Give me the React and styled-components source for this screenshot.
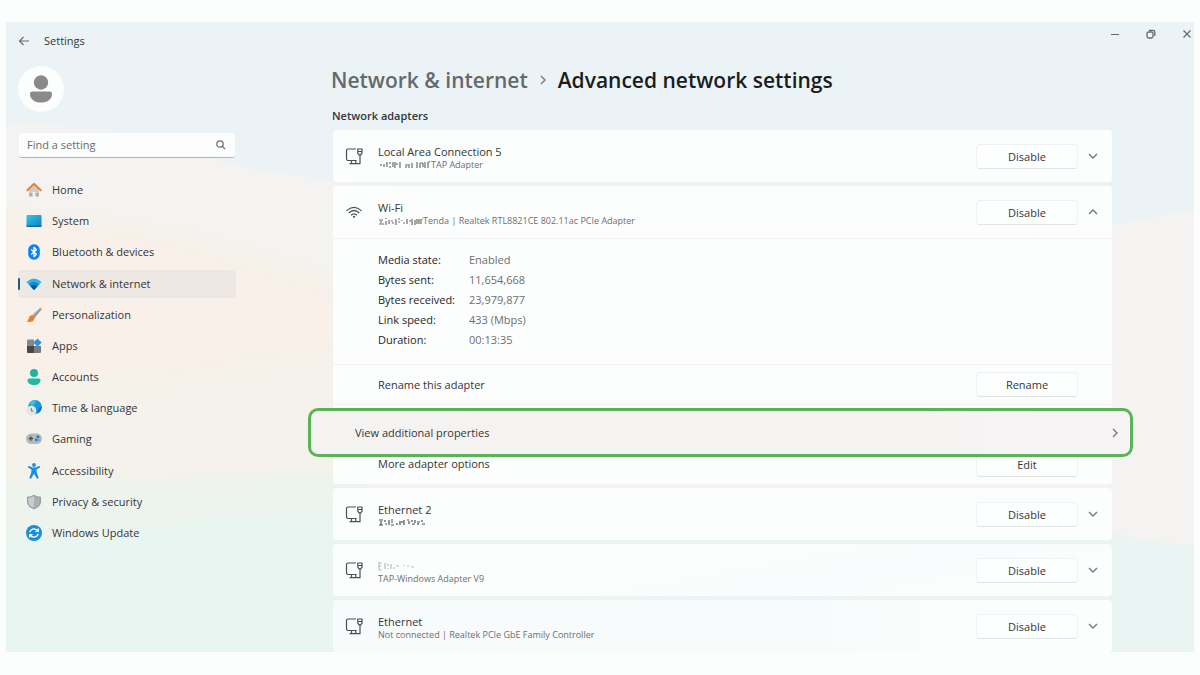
import React from "react";
import styled, { createGlobalStyle } from "styled-components";

const GlobalStyle = createGlobalStyle`
  *, *::before, *::after { box-sizing: border-box; }
  body {
    margin: 0;
    background: #fcfdfd;
    color: #343638;
    font: 11px/16px "Open Sans", "Noto Sans", sans-serif;
  }
  button, input { font: inherit; color: inherit; }
  h1, h2, h3, p, ul, dl, dd { margin: 0; padding: 0; font: inherit; }
  svg { display: block; flex: none; }
`;

const Page = styled.div`
  padding: 22px 6px;
`;

const Window = styled.div`
  position: relative;
  isolation: isolate;
  overflow: hidden;
  background: #f4f3f1;
`;

const WallpaperSvg = styled.svg`
  position: absolute;
  inset: 0;
  z-index: -1;
  width: 100%;
  height: 100%;
`;

const TitleBar = styled.header`
  display: flex;
  justify-content: space-between;
  height: 38px;
`;

const TitleGroup = styled.div`
  display: flex;
  align-items: center;
  gap: 14px;
  padding-left: 12px;
`;

const WindowControls = styled.div`
  display: flex;
  gap: 24px;
  padding: 6px 1px 0 0;
`;

const IconButton = styled.button`
  display: grid;
  place-items: center;
  width: 12px;
  height: 12px;
  padding: 0;
  border: 0;
  background: none;
`;

const Body = styled.div`
  display: flex;
  align-items: flex-start;
`;

const Sidebar = styled.aside`
  flex: 0 0 242px;
  padding: 6px 12px 0;
`;

const Avatar = styled.div`
  display: grid;
  place-items: center;
  width: 46px;
  height: 46px;
  border-radius: 50%;
  background: #fcfdfd;
`;

const SearchBox = styled.label`
  display: flex;
  align-items: center;
  height: 25px;
  margin: 21px 1px 18px 1px;
  padding: 0 8px;
  border-radius: 3px;
  border-bottom: 1px solid #a9b6ba;
  background: #fcfdfd;
`;

const SearchInput = styled.input`
  flex: 1;
  min-width: 0;
  padding: 0;
  border: 0;
  outline: 0;
  background: none;
  &::placeholder { color: #6a6c6d; opacity: 1; }
`;

const NavList = styled.ul`
  display: flex;
  flex-direction: column;
  justify-content: space-between;
  height: 371px;
  list-style: none;
`;

const NavLink = styled.a`
  position: relative;
  display: flex;
  align-items: center;
  gap: 10px;
  height: 28px;
  padding-left: 8px;
  border-radius: 4px;
  color: inherit;
  text-decoration: none;
  background: ${(p) => (p.$active ? "#eee8e5" : "none")};
  &::before {
    content: "";
    position: absolute;
    left: 0;
    width: 2px;
    height: 12px;
    border-radius: 1px;
    background: ${(p) => (p.$active ? "#1b5f7d" : "none")};
  }
`;

const Main = styled.main`
  flex: 1;
  min-width: 0;
  padding: 5px 82px 0 85px;
`;

const Breadcrumb = styled.div`
  display: flex;
  align-items: center;
  gap: 9px;
  margin-left: -2px;
  font-size: 21px;
  line-height: 30px;
  font-weight: 600;
  white-space: nowrap;
`;

const ParentCrumb = styled.a`
  color: #65696b;
  text-decoration: none;
`;

const PageTitle = styled.h1`
  color: #1b1c1d;
`;

const SectionLabel = styled.h2`
  margin: 13px 0 6px -1px;
  font-weight: 600;
`;

const CardList = styled.div`
  display: grid;
  gap: 4px;
`;

const Card = styled.section`
  border-radius: 4px;
  background: ${(p) => p.$tint || "#fcfdfd"};
`;

const CardHeader = styled.div`
  display: flex;
  align-items: center;
  height: 52px;
  padding: 0 13px 0 12px;
`;

const CardText = styled.div`
  flex: 1;
  min-width: 0;
  padding: 3px 0 0 15px;
`;

const CardTitle = styled.h3`
  display: flex;
  align-items: center;
  height: 14px;
`;

const CardSubtitle = styled.p`
  display: flex;
  align-items: center;
  height: 12px;
  color: #6d6f70;
  font-size: 9px;
  white-space: nowrap;
`;

const ActionButton = styled.button`
  width: 102px;
  height: 25px;
  padding: 1px 0 0;
  border: 1px solid #f1f1f1;
  border-bottom-color: #e2e3e3;
  border-radius: 4px;
  background: #fdfefe;
`;

const ExpandButton = styled(IconButton)`
  margin-left: 9px;
`;

const Details = styled.dl`
  display: grid;
  grid-template-columns: 91px 1fr;
  grid-auto-rows: 20px;
  align-items: center;
  height: 126px;
  padding: 11px 45px 14px;
  border-top: 1px solid #f3f2f1;
`;

const Term = styled.dt`
  color: #242628;
`;

const Value = styled.dd`
  color: #6d6f70;
`;

const OptionRow = styled.div`
  display: flex;
  align-items: center;
  justify-content: space-between;
  position: relative;
  height: 40px;
  padding: 0 34px 0 45px;
  border-top: ${(p) => (p.$divided ? "1px solid #f3f2f1" : "0")};
`;

const Callout = styled.a`
  position: absolute;
  inset: 3px -21px -13px -25px;
  z-index: 1;
  display: flex;
  align-items: center;
  justify-content: space-between;
  padding: 0 9px 0 44px;
  border: 3px solid #5cb258;
  border-radius: 10px;
  background: linear-gradient(90deg, #f4f3f2 75%, #f7f4f5 90%);
  color: inherit;
  text-decoration: none;
`;

function Wallpaper() {
  return (
    <WallpaperSvg viewBox="0 0 1188 630" preserveAspectRatio="none" aria-hidden="true">
      <defs>
        <filter id="soft" x="-10%" y="-10%" width="120%" height="120%">
          <feGaussianBlur stdDeviation="6" />
        </filter>
        <filter id="edge" x="-5%" y="-5%" width="110%" height="110%">
          <feGaussianBlur stdDeviation="1" />
        </filter>
      </defs>
      <rect width="1188" height="630" fill="#f4f3f1" />
      <path d="M-20 -20H1210V188C1160 190 1130 200 1104 203L340 160C290 154 260 150 228 143C190 130 150 118 110 110C70 103 30 103 -20 101Z" fill="#ebf3f6" filter="url(#edge)" />
      <g filter="url(#soft)">
        <path d="M-40 186C50 184 100 194 160 204C230 216 290 244 360 256V700H-40Z" fill="#f4f2ea" />
        <path d="M-40 196C60 194 90 204 150 216C220 230 280 258 350 276V332C290 334 220 340 160 358L-40 362Z" fill="#f8f0e9" />
        <path d="M-40 466C60 454 200 460 360 450V700H-40Z" fill="#edf3ed" />
        <path d="M-40 524C60 512 180 496 360 488V700H-40Z" fill="#e8f5f1" />
      </g>
      <path d="M330 480C600 490 900 500 1104 510C1130 518 1160 522 1210 524V660H330Z" fill="#eaf4f2" filter="url(#edge)" />
    </WallpaperSvg>
  );
}

function Chevron({ dir = "down" }) {
  const turn = { down: 0, up: 180, right: -90 }[dir];
  return (
    <svg width="12" height="12" viewBox="0 0 12 12" aria-hidden="true">
      <path d="M2 4L6 8L10 4" transform={`rotate(${turn} 6 6)`} fill="none" stroke="#77797a" strokeWidth="1.4" />
    </svg>
  );
}

function EthernetIcon() {
  return (
    <svg width="18" height="18" viewBox="0 0 18 18" fill="none" stroke="#4c4f52" strokeWidth="1.2" aria-hidden="true">
      <path d="M11 2H3Q1.500 2 1.500 3.500V11.500Q1.500 13.500 3 13.500H11.500" />
      <path d="M6.500 13.500V16.500M10.800 13.500V16.500M4.500 16.700H15V8" />
      <path d="M12.800 2H17V6.200L15.700 7.900H14L12.800 6.200ZM12.800 4.500H17" />
    </svg>
  );
}

function WifiIcon() {
  return (
    <svg width="18" height="18" viewBox="0 0 18 18" fill="none" stroke="#4c4f52" strokeWidth="1.2" aria-hidden="true">
      <path d="M1.400 7.900Q9 1 16.600 7.900M3.700 10Q9 5 14.300 10M6 12.200Q9 9.400 12 12.200" />
      <circle cx="9" cy="13.800" r="1.100" fill="#4c4f52" stroke="none" />
    </svg>
  );
}

/* Worn-away strokes left where a name has been rubbed out. */
function Scrub({ width, marks, color = "#6d6f70" }) {
  return (
    <svg width={width} height="10" viewBox={`0 0 ${width} 10`} aria-hidden="true">
      <path d={marks} fill="none" stroke={color} strokeWidth="1.2" />
    </svg>
  );
}

const SCRUBS = {
  lan: "M3 4V6M6 4V7M9 2V7M12 2V4M12 6V8M15 2V7M17 2V8M19 3V5M22 2V8M27 5H30M28 6V8M31 4V8M34 3V8M39 2V8M42 3V8M42 3H45M45 3V7M47 2V8M50 2V8M50 2H52",
  wifi: "M1 4H5M3 5V7M1 8H6M8 2V3M8 5V9M11 4V8M13 5H15M14 7H16M18 3V9M20 3H22M20 6H22M24 4V5M25 7H27M29 3V8M31 5H33M34 3V9M37 4V9M39 3V8M41 3V8M43 3V8M44 3H46",
  eth: "M1 2H5M3 3V7M1 7H5M7 2V4M7 6H9M11 2V7M13 2H15M13 4H15M13 7H16M19 5V7M22 3V7M24 3V5M26 2V7M29 2H31M31 3V6M34 2V4M34 6H37M37 2V5M39 4H42M40 5V7M44 2V4M44 6H47",
  name: "M1 1V9M1 2H4M1 5H3M1 9H4M7 2V8M10 3V5M10 7V8M13 3V8M16 6V8M18 5H21M26 4V5M29 5H31M33 6H36",
};

const NAV_ART = {
  Home: (
    <>
      <path d="M3 7L8 2.500L13 7V14.500H9.500V10H6.500V14.500H3Z" fill="#cfcdcc" />
      <path d="M3 11H6.500V14.500H3ZM9.500 11H13V14.500H9.500Z" fill="#b2b2b3" />
      <path d="M1.300 8.200L8 1.800L14.700 8.200" fill="none" stroke="#e9832f" strokeWidth="2" strokeLinecap="round" strokeLinejoin="round" />
    </>
  ),
  System: (
    <>
      <rect x=".5" y="2" width="15" height="12" rx="1" fill="url(#screen)" />
      <path d="M.5 12.500H15.500V13Q15.500 14 14.500 14H1.500Q.5 14 .5 13Z" fill="#106d9f" />
    </>
  ),
  "Bluetooth & devices": (
    <>
      <rect x="2.200" y=".3" width="11.600" height="15.400" rx="5.600" fill="#0a83f4" />
      <path d="M5.200 5.500L10.500 10.300L8 12.700V3.300L10.500 5.700L5.200 10.500" fill="none" stroke="#fff" strokeWidth="1.200" strokeLinejoin="round" />
    </>
  ),
  "Network & internet": (
    <>
      <path d="M8 14L.4 6Q8-1 15.600 6Z" fill="#2db3ea" />
      <path d="M8 14L2.600 8.300Q8 3.300 13.400 8.300Z" fill="#1688d0" />
      <path d="M8 14L4.700 10.500Q8 7.500 11.300 10.500Z" fill="#0a5396" />
    </>
  ),
  Personalization: (
    <>
      <path d="M14.300.7Q16 .8 15.400 2.400L8.500 11L5.800 8.500Z" fill="#8d9399" />
      <path d="M14.300.7L5.800 8.500L7 9.600L15 1Z" fill="#b5babd" />
      <path d="M5.500 8.300Q8.700 9 8.500 11.500C8 15 3.500 15.600.4 14.500Q2.500 13.500 2.800 11.300Q3.200 8.600 5.500 8.300Z" fill="#ec7c25" />
    </>
  ),
  Apps: (
    <>
      <path d="M2 1.500H8V8H1V2.500Q1 1.500 2 1.500Z" fill="#85898d" />
      <path d="M1 8H8V15H2Q1 15 1 14Z" fill="#44484c" />
      <path d="M8 8H15V14Q15 15 14 15H8Z" fill="#777b7f" />
      <path d="M11.500.4L15.700 4.600L11.500 8.800L7.300 4.600Z" fill="#2394e8" />
    </>
  ),
  Accounts: (
    <>
      <circle cx="8" cy="4" r="4" fill="#19b89f" />
      <path d="M3 9.500H13Q14.500 9.500 14.500 11C14.500 14.500 11.500 16 8 16S1.500 14.500 1.500 11Q1.500 9.500 3 9.500Z" fill="#1fb9a0" />
    </>
  ),
  "Time & language": (
    <>
      <circle cx="9" cy="7" r="6.900" fill="#1b98da" />
      <path d="M3.500 3.500Q6 .2 10 .4Q11 2 8.500 3.500Q8.500 5.500 6 5.500Q4 5 3.500 3.500Z" fill="#3fc0dc" />
      <path d="M15.800 6Q15.500 11.500 11.500 13.300Q10.500 9 15.800 6Z" fill="#1277c4" />
      <circle cx="5.300" cy="10.700" r="5" fill="#e6e6e8" />
      <path d="M5.300 8V11H7.500" fill="none" stroke="#72777b" />
    </>
  ),
  Gaming: (
    <>
      <rect x="0" y="2.500" width="16" height="10.500" rx="5.200" fill="#b3b9be" />
      <path d="M4.800 5.300V9.700M2.600 7.500H7" stroke="#4b5054" strokeWidth="1.300" />
      <circle cx="12" cy="5.800" r="1.400" fill="#1d6fb8" />
      <circle cx="10.300" cy="8.900" r="1.400" fill="#2183cf" />
      <circle cx="13" cy="9" r="1" fill="#5ba2d8" />
    </>
  ),
  Accessibility: (
    <>
      <circle cx="8" cy="2" r="1.900" fill="#1b8ee0" />
      <path d="M2.800 3.100L6.500 4.600H9.500L13.200 3.100Q14.600 3.200 14 4.500L10.600 6.400V9.200L12.600 14.600Q12.300 16 10.900 15.500L8 10.800L5.100 15.500Q3.700 16 3.400 14.600L5.400 9.200V6.400L2 4.500Q1.400 3.200 2.800 3.100Z" fill="#1b8ee0" />
    </>
  ),
  "Privacy & security": (
    <>
      <path d="M8 .7Q11 2.600 15 2.800V7.500C15 11.500 12 13.800 8 15.200C4 13.800 1 11.500 1 7.500V2.800Q5 2.600 8 .7Z" fill="#989ea3" />
      <path d="M8 2Q5 3.600 2.200 3.900V7.500C2.200 10.700 4.500 12.700 8 14Z" fill="#c8cccf" />
      <path d="M8 2Q11 3.600 13.800 3.900V7.500C13.800 10.700 11.500 12.700 8 14Z" fill="#abb0b4" />
    </>
  ),
  "Windows Update": (
    <>
      <circle cx="8" cy="8" r="8" fill="#1b8ddb" />
      <path d="M3.700 7.300Q5 3.900 8.200 3.900Q10.500 4 12 6M12.300 3.500V6.300H9.500M12.300 8.700Q11 12.100 7.800 12.100Q5.500 12 4 10M3.700 12.500V9.700H6.500" fill="none" stroke="#fff" strokeWidth="1.300" />
    </>
  ),
};

function NavIcon({ name }) {
  return (
    <svg width="16" height="16" viewBox="0 0 16 16" aria-hidden="true">
      <defs>
        <linearGradient id="screen" x1="0" y1="0" x2="1" y2="1">
          <stop offset="0" stopColor="#2ccbe6" />
          <stop offset="1" stopColor="#1479c4" />
        </linearGradient>
      </defs>
      {NAV_ART[name]}
    </svg>
  );
}

const STATS = [
  ["Media state:", "Enabled"],
  ["Bytes sent:", "11,654,668"],
  ["Bytes received:", "23,979,877"],
  ["Link speed:", "433 (Mbps)"],
  ["Duration:", "00:13:35"],
];

function Adapter({ icon, title, subtitle, open, tint, children }) {
  return (
    <Card $tint={tint}>
      <CardHeader>
        {icon || <EthernetIcon />}
        <CardText>
          <CardTitle>{title}</CardTitle>
          <CardSubtitle>{subtitle}</CardSubtitle>
        </CardText>
        <ActionButton type="button">Disable</ActionButton>
        <ExpandButton type="button" aria-label="Details" aria-expanded={!!open}>
          <Chevron dir={open ? "up" : "down"} />
        </ExpandButton>
      </CardHeader>
      {children}
    </Card>
  );
}

export default function App() {
  return (
    <Page>
      <GlobalStyle />
      <Window>
        <Wallpaper />
        <TitleBar>
          <TitleGroup>
            <IconButton type="button" aria-label="Back">
              <svg width="12" height="12" viewBox="0 0 12 12" fill="none" stroke="#66696b" strokeWidth="1.100">
                <path d="M11 6H1.500M5.500 2L1.500 6L5.500 10" />
              </svg>
            </IconButton>
            <span>Settings</span>
          </TitleGroup>
          <WindowControls>
            <IconButton type="button" aria-label="Minimize">
              <svg width="12" height="12" viewBox="0 0 12 12" stroke="#66696b">
                <path d="M2 6.500H10" />
              </svg>
            </IconButton>
            <IconButton type="button" aria-label="Restore">
              <svg width="12" height="12" viewBox="0 0 12 12" fill="none" stroke="#66696b" strokeWidth="1.300">
                <rect x="2" y="4" width="6" height="6" rx="1.500" />
                <path d="M4 2.300H8Q9.800 2.300 9.800 4V8" />
              </svg>
            </IconButton>
            <IconButton type="button" aria-label="Close">
              <svg width="12" height="12" viewBox="0 0 12 12" stroke="#66696b" strokeWidth="1.200">
                <path d="M2.500 2.500L9.500 9.500M9.500 2.500L2.500 9.500" />
              </svg>
            </IconButton>
          </WindowControls>
        </TitleBar>
        <Body>
          <Sidebar>
            <Avatar>
              <svg width="24" height="28" viewBox="0 0 24 28" fill="#8a8a8b" aria-hidden="true">
                <circle cx="12" cy="7.500" r="7.200" />
                <path d="M3 16.500H21Q23 16.500 23 19C23 25 17.500 27.500 12 27.500S1 25 1 19Q1 16.500 3 16.500Z" />
              </svg>
            </Avatar>
            <SearchBox>
              <SearchInput type="text" placeholder="Find a setting" aria-label="Find a setting" />
              <svg width="12" height="12" viewBox="0 0 12 12" fill="none" stroke="#6b6e70" strokeWidth="1.200" aria-hidden="true">
                <circle cx="5" cy="5" r="3.200" />
                <path d="M7.400 7.400L10 10" />
              </svg>
            </SearchBox>
            <nav>
              <NavList>
                {Object.keys(NAV_ART).map((name) => (
                  <li key={name}>
                    <NavLink href="#" $active={name === "Network & internet"}>
                      <NavIcon name={name} />
                      {name}
                    </NavLink>
                  </li>
                ))}
              </NavList>
            </nav>
          </Sidebar>
          <Main>
            <Breadcrumb>
              <ParentCrumb href="#">Network &amp; internet</ParentCrumb>
              <Chevron dir="right" />
              <PageTitle>Advanced network settings</PageTitle>
            </Breadcrumb>
            <SectionLabel>Network adapters</SectionLabel>
            <CardList>
              <Adapter
                title="Local Area Connection 5"
                subtitle={<><Scrub width={53} marks={SCRUBS.lan} />TAP Adapter</>}
              />
              <Adapter
                icon={<WifiIcon />}
                title="Wi-Fi"
                subtitle={<><Scrub width={45} marks={SCRUBS.wifi} />Tenda | Realtek RTL8821CE 802.11ac PCIe Adapter</>}
                open
              >
                <Details>
                  {STATS.map(([term, value]) => (
                    <React.Fragment key={term}>
                      <Term>{term}</Term>
                      <Value>{value}</Value>
                    </React.Fragment>
                  ))}
                </Details>
                <OptionRow $divided>
                  Rename this adapter
                  <ActionButton type="button">Rename</ActionButton>
                </OptionRow>
                <OptionRow $divided>
                  <Callout href="#">
                    View additional properties
                    <Chevron dir="right" />
                  </Callout>
                </OptionRow>
                <OptionRow>
                  More adapter options
                  <ActionButton type="button">Edit</ActionButton>
                </OptionRow>
              </Adapter>
              <Adapter title="Ethernet 2" subtitle={<Scrub width={48} marks={SCRUBS.eth} color="#4c4f51" />} />
              <Adapter
                title={<Scrub width={38} marks={SCRUBS.name} color="#b9bcbd" />}
                subtitle="TAP-Windows Adapter V9"
                tint="linear-gradient(170deg, #fcfdfd 45%, #f8fcfc 65%, #fcfdfd 80%)"
              />
              <Adapter
                title="Ethernet"
                subtitle="Not connected | Realtek PCIe GbE Family Controller"
                tint="linear-gradient(90deg, #f7fbfc 60%, #fcfdfd 80%)"
              />
            </CardList>
          </Main>
        </Body>
      </Window>
    </Page>
  );
}
